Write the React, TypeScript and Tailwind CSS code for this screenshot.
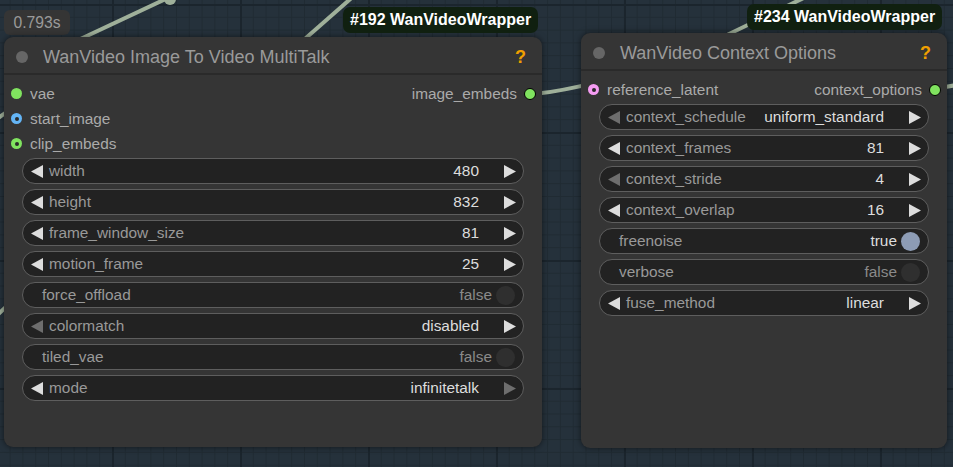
import React from 'react'

type SlotKind = 'filled' | 'ring'

type Slot = {
  name: string
  color: string
  kind: SlotKind
  outline?: boolean
}

type Widget =
  | { type: 'number'; label: string; value: string; leftDim?: boolean; rightDim?: boolean }
  | { type: 'toggle'; label: string; on: boolean }

const WIRE = '#9fb09a'

function Dot({ slot }: { slot: Slot }) {
  if (slot.kind === 'ring') {
    return (
      <span
        className="flex h-[11px] w-[11px] shrink-0 items-center justify-center rounded-full"
        style={{ backgroundColor: slot.color }}
      >
        <span className="h-[4px] w-[4px] rounded-full bg-[#2a2a2a]" />
      </span>
    )
  }
  return (
    <span
      className={
        slot.outline
          ? 'h-[12px] w-[12px] shrink-0 rounded-full border border-black'
          : 'h-[11px] w-[11px] shrink-0 rounded-full'
      }
      style={{ backgroundColor: slot.color }}
    />
  )
}

function Arrow({ dir, dim }: { dir: 'left' | 'right'; dim?: boolean }) {
  const fill = dim ? '#6e6e6e' : '#dddddd'
  return (
    <svg width="12" height="13" viewBox="0 0 12 13" className="shrink-0">
      {dir === 'left' ? (
        <path d="M0 6.5 L12 0 L12 13 Z" fill={fill} />
      ) : (
        <path d="M12 6.5 L0 0 L0 13 Z" fill={fill} />
      )}
    </svg>
  )
}

function WidgetRow({ w }: { w: Widget }) {
  if (w.type === 'toggle') {
    return (
      <div className="flex h-[26px] items-center rounded-full border border-[#5e5e5e] bg-[#222222] pl-[19px] pr-[8px]">
        <span className="text-[#999999]">{w.label}</span>
        <span className={w.on ? 'ml-auto text-[#dddddd]' : 'ml-auto text-[#8a8a8a]'}>
          {w.on ? 'true' : 'false'}
        </span>
        <span
          className={
            w.on
              ? 'ml-[4px] h-[19px] w-[19px] rounded-full bg-[#8d9cb5]'
              : 'ml-[4px] h-[19px] w-[19px] rounded-full bg-[#2f2f2f]'
          }
        />
      </div>
    )
  }
  return (
    <div className="flex h-[26px] items-center rounded-full border border-[#5e5e5e] bg-[#222222] pl-[8px] pr-[7px]">
      <Arrow dir="left" dim={w.leftDim} />
      <span className="ml-[6px] text-[#999999]">{w.label}</span>
      <span className="ml-auto text-[#dddddd]">{w.value}</span>
      <span className="ml-[25px]">
        <Arrow dir="right" dim={w.rightDim} />
      </span>
    </div>
  )
}

type NodeProps = {
  x: number
  y: number
  w: number
  h: number
  title: string
  inputs: Slot[]
  outputs: Slot[]
  widgets: Widget[]
}

function Node({ x, y, w, h, title, inputs, outputs, widgets }: NodeProps) {
  const rows = Math.max(inputs.length, outputs.length)
  return (
    <div
      className="absolute flex flex-col rounded-[9px] bg-[#353535] shadow-[0_0_6px_rgba(0,0,0,0.55)]"
      style={{ left: x, top: y, width: w, height: h }}
    >
      <div className="flex h-[38px] shrink-0 items-center border-b-2 border-[#2a2a2a] pl-[12px] pr-[16px] pt-[3px]">
        <span className="h-[12px] w-[12px] rounded-full bg-[#666666]" />
        <span className="ml-[15px] text-[18px] text-[#9a9a9a]">{title}</span>
        <span className="ml-auto text-[18px] font-bold text-[#f0a000]">?</span>
      </div>
      <div className="flex flex-col pt-[6px]">
        {Array.from({ length: rows }).map((_, i) => (
          <div key={i} className="flex h-[25px] items-center">
            {inputs[i] ? (
              <div className="flex items-center pl-[7px]">
                <Dot slot={inputs[i]} />
                <span className="ml-[8px] text-[#aaaaaa]">{inputs[i].name}</span>
              </div>
            ) : null}
            {outputs[i] ? (
              <div className="ml-auto flex items-center pr-[6px]">
                <span className="mr-[7px] text-[#aaaaaa]">{outputs[i].name}</span>
                <Dot slot={outputs[i]} />
              </div>
            ) : null}
          </div>
        ))}
      </div>
      <div className="mt-[2px] flex flex-col gap-[5px] px-[18px]">
        {widgets.map((wd) => (
          <WidgetRow key={wd.label} w={wd} />
        ))}
      </div>
    </div>
  )
}

function Badge({ x, y, text }: { x: number; y: number; text: string }) {
  return (
    <div
      className="absolute flex h-[26px] items-center rounded-[7px] bg-[#102010] px-[7px] text-[16px] font-bold text-white"
      style={{ left: x, top: y }}
    >
      {text}
    </div>
  )
}

const node1Widgets: Widget[] = [
  { type: 'number', label: 'width', value: '480' },
  { type: 'number', label: 'height', value: '832' },
  { type: 'number', label: 'frame_window_size', value: '81' },
  { type: 'number', label: 'motion_frame', value: '25' },
  { type: 'toggle', label: 'force_offload', on: false },
  { type: 'number', label: 'colormatch', value: 'disabled', leftDim: true },
  { type: 'toggle', label: 'tiled_vae', on: false },
  { type: 'number', label: 'mode', value: 'infinitetalk', rightDim: true },
]

const node2Widgets: Widget[] = [
  { type: 'number', label: 'context_schedule', value: 'uniform_standard', leftDim: true },
  { type: 'number', label: 'context_frames', value: '81' },
  { type: 'number', label: 'context_stride', value: '4', leftDim: true },
  { type: 'number', label: 'context_overlap', value: '16' },
  { type: 'toggle', label: 'freenoise', on: true },
  { type: 'toggle', label: 'verbose', on: false },
  { type: 'number', label: 'fuse_method', value: 'linear' },
]

export default function App() {
  return (
    <div className="relative h-[467px] w-[953px] overflow-hidden bg-[#25313b] font-['Liberation_Sans',Arial,sans-serif] text-[15.4px] leading-none [background-image:linear-gradient(to_right,#1b252d_2px,transparent_2px),linear-gradient(to_bottom,#1b252d_2px,transparent_2px),linear-gradient(to_right,#202b33_1px,transparent_1px),linear-gradient(to_bottom,#202b33_1px,transparent_1px)] [background-position:112px_4px,112px_4px,112px_4px,112px_4px] [background-size:128px_128px,128px_128px,12.8px_12.8px,12.8px_12.8px]">
      <svg className="absolute inset-0" width="953" height="467">
        <g stroke={WIRE} strokeWidth="4" fill="none" strokeLinecap="round">
          <line x1="172" y1="-4" x2="40" y2="58" />
          <line x1="356" y1="-6" x2="290" y2="52" />
          <line x1="812" y1="-6" x2="700" y2="48" />
          <path d="M530 94 C 555 93, 570 88, 600 82 L 640 74" />
          <path d="M934 89 L 962 84" />
          <path d="M-10 124 L 8 111" />
          <path d="M-6 318 L 8 305" />
        </g>
        <circle cx="170" cy="-1" r="6" fill={WIRE} />
      </svg>

      <div className="absolute left-[4px] top-[10px] flex h-[25px] w-[66px] items-center justify-center rounded-md bg-[#353535] text-[15.7px] text-[#9a9a9a]">
        0.793s
      </div>

      <Node
        x={4}
        y={37}
        w={538}
        h={410}
        title="WanVideo Image To Video MultiTalk"
        inputs={[
          { name: 'vae', color: '#80e35f', kind: 'filled' },
          { name: 'start_image', color: '#64b5f6', kind: 'ring' },
          { name: 'clip_embeds', color: '#80e35f', kind: 'ring' },
        ]}
        outputs={[{ name: 'image_embeds', color: '#80e35f', kind: 'filled', outline: true }]}
        widgets={node1Widgets}
      />

      <Node
        x={581}
        y={33}
        w={366}
        h={415}
        title="WanVideo Context Options"
        inputs={[{ name: 'reference_latent', color: '#f59cf2', kind: 'ring' }]}
        outputs={[{ name: 'context_options', color: '#80e35f', kind: 'filled', outline: true }]}
        widgets={node2Widgets}
      />

      <Badge x={343} y={7} text="#192 WanVideoWrapper" />
      <Badge x={747} y={4} text="#234 WanVideoWrapper" />
    </div>
  )
}
